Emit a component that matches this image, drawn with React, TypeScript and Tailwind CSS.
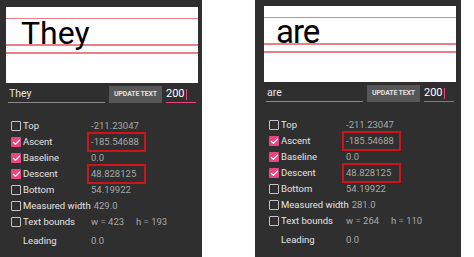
import { Check } from "lucide-react";

type Row = { label: string; value: string; checked?: boolean; boxed?: boolean };

function rows(width: string): Row[] {
  return [
    { label: "Top", value: "-211.23047" },
    { label: "Ascent", value: "-185.54688", checked: true, boxed: true },
    { label: "Baseline", value: "0.0", checked: true },
    { label: "Descent", value: "48.828125", checked: true, boxed: true },
    { label: "Bottom", value: "54.19922" },
    { label: "Measured width", value: width },
  ];
}

function Checkbox({ checked }: { checked?: boolean }) {
  if (checked) {
    return (
      <span className="flex h-[10px] w-[10px] items-center justify-center rounded-[1px] bg-[#e8467e]">
        <Check className="h-[9px] w-[9px] text-white" strokeWidth={3.5} />
      </span>
    );
  }
  return <span className="h-[10px] w-[10px] rounded-[1px] border-[1.5px] border-[#c4c4c4]" />;
}

function Panel({
  word,
  width,
  boundsW,
  boundsH,
  wClass,
  padClass,
  labelW,
  wordClass,
}: {
  word: string;
  width: string;
  boundsW: string;
  boundsH: string;
  wClass: string;
  padClass: string;
  labelW: string;
  wordClass: string;
}) {
  return (
    <div className={`flex h-[257px] flex-col bg-[#2f2f2f] ${wClass} ${padClass}`}>
      {/* canvas */}
      <div className="relative h-[76px] w-[192px] overflow-hidden bg-white">
        <div className="absolute left-0 right-0 top-[11px] h-px bg-[#ec7f86]" />
        <div className="absolute left-0 right-0 top-[37px] h-[1.5px] bg-[#ec7f86]" />
        <div className="absolute left-0 right-0 top-[45px] h-[1.5px] bg-[#ec7f86]" />
        <span className={`absolute font-['Roboto',sans-serif] leading-none text-black ${wordClass}`}>
          {word}
        </span>
      </div>

      {/* input row */}
      <div className="mt-[3px] flex h-[17px] items-center font-['Roboto',sans-serif]">
        <div className="ml-[2px] flex h-[17px] w-[97px] items-center border-b border-[#8a8a8a] pl-px text-[10.5px] text-[#e6e6e6]">
          {word}
        </div>
        <div className="ml-[4px] flex h-[17px] w-[53px] items-center justify-center bg-[#565656] text-[7px] font-bold tracking-tight text-[#e0e0e0]">
          UPDATE TEXT
        </div>
        <div className="ml-[4px] flex h-[17px] w-[30px] items-center border-b-[1.5px] border-[#e8467e] text-[11px] text-white">
          200<span className="ml-px h-[11px] w-px bg-[#e8467e]" />
        </div>
      </div>

      {/* metrics */}
      <div className="mt-[15px] flex flex-col whitespace-nowrap font-['Roboto',sans-serif] text-[9.5px]">
        {rows(width).map((r) => (
          <div key={r.label} className="flex h-[16px] items-center">
            <span className="ml-[5px] flex w-[12px] shrink-0 items-center">
              <Checkbox checked={r.checked} />
            </span>
            <span className={`${labelW} shrink-0 pr-[3px] text-[#e4e4e4]`}>{r.label}</span>
            {r.boxed ? (
              <span className="-ml-[4px] flex h-[20px] w-[59px] items-center border-2 border-[#d0121b] pl-[2px] text-[#a8a8a8]">
                {r.value}
              </span>
            ) : (
              <span className="text-[#a8a8a8]">{r.value}</span>
            )}
          </div>
        ))}
        <div className="flex h-[16px] items-center">
          <span className="ml-[5px] flex w-[12px] shrink-0 items-center">
            <Checkbox />
          </span>
          <span className={`${labelW} shrink-0 text-[#e4e4e4]`}>Text bounds</span>
          <span className="w-[45px] text-[#a8a8a8]">{boundsW}</span>
          <span className="text-[#a8a8a8]">{boundsH}</span>
        </div>
        <div className="mt-[3px] flex h-[16px] items-center">
          <span className={`ml-[17px] ${labelW} shrink-0 text-[#e4e4e4]`}>Leading</span>
          <span className="text-[#a8a8a8]">0.0</span>
        </div>
      </div>
    </div>
  );
}

export default function App() {
  return (
    <div className="flex h-[257px] w-[474px] bg-white">
      <Panel
        word="They"
        width="429.0"
        boundsW="w = 423"
        boundsH="h = 193"
        wClass="w-[202px]"
        padClass="pl-[6px] pt-[7px]"
        labelW="min-w-[68px]"
        wordClass="left-[15px] top-[10px] text-[32px]"
      />
      <div className="w-[53px]" />
      <Panel
        word="are"
        width="281.0"
        boundsW="w = 264"
        boundsH="h = 110"
        wClass="w-[206px]"
        padClass="pl-[9px] pt-[6px]"
        labelW="min-w-[65px]"
        wordClass="left-[12px] top-[9px] text-[33px] tracking-[-1px]"
      />
    </div>
  );
}
